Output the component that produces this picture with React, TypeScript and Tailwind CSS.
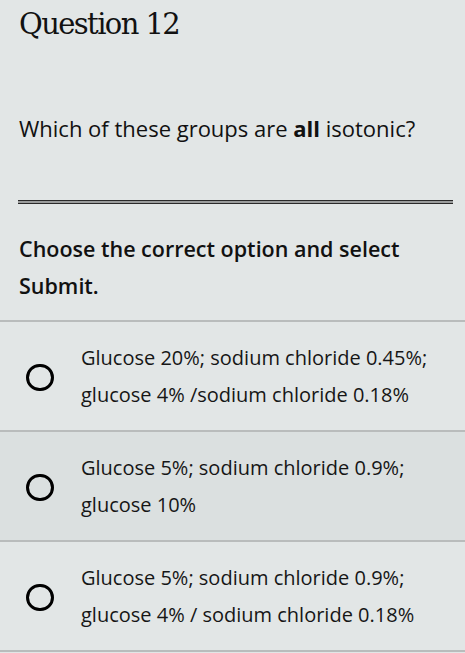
import React from 'react';

const OPTIONS = [
  { id: 'a', lines: ['Glucose 20%; sodium chloride 0.45%;', 'glucose 4% /sodium chloride 0.18%'] },
  { id: 'b', lines: ['Glucose 5%; sodium chloride 0.9%;', 'glucose 10%'] },
  { id: 'c', lines: ['Glucose 5%; sodium chloride 0.9%;', 'glucose 4% / sodium chloride 0.18%'] },
];

export default function App() {
  return (
    <div
      className="w-[465px] h-[653px] overflow-hidden bg-[#e2e6e6] text-[#111]"
      style={{ fontFamily: '"Open Sans", sans-serif' }}
    >
      {/* header */}
      <div className="px-[19px] pt-[2px]">
        <h1
          className="text-[29px] leading-[44px] tracking-[-1.6px] text-[#111]"
          style={{ fontFamily: '"DejaVu Serif", serif' }}
        >
          Question 12
        </h1>
        <p className="mt-[67px] text-[22px] leading-[30px]">
          Which of these groups are <b className="font-bold">all</b> isotonic?
        </p>
        <div className="mt-[57px] h-[4px] border-y border-[#2a2a2a] bg-[#9a9c9c] mr-[-7px] ml-[-1px]" />
        <p className="mt-[26px] text-[21.5px] leading-[37px] font-semibold">
          Choose the correct option and select Submit.
        </p>
      </div>

      {/* options */}
      <div className="mt-[16px] border-t-2 border-[#b9bcbc]">
        {OPTIONS.map((opt, i) => (
          <div
            key={opt.id}
            className={`flex items-center h-[110px] border-b-2 border-[#b9bcbc] ${
              i === 1 ? 'bg-[#dbe0e0]' : 'bg-[#e2e6e6]'
            }`}
          >
            <div className="w-[81px] flex justify-center pr-[1px]">
              <span className="block w-[28px] h-[27px] rounded-full border-[3px] border-black mt-[3px]" />
            </div>
            <div className="text-[20px] leading-[37px] text-[#161616] mt-[-1px]">
              {opt.lines.map((l) => (
                <div key={l}>{l}</div>
              ))}
            </div>
          </div>
        ))}
      </div>
    </div>
  );
}
